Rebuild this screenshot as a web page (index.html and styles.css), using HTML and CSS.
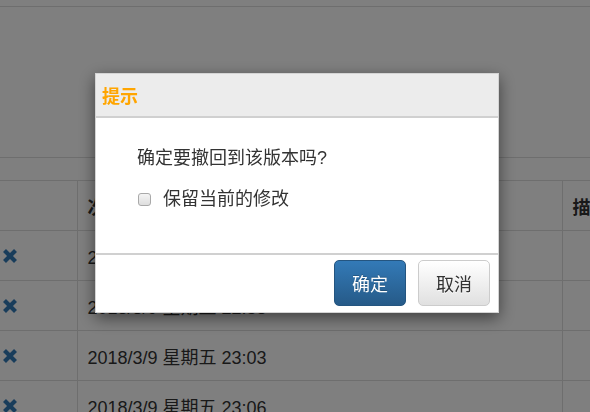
FILE: index.html
```html
<!DOCTYPE html>
<html lang="zh-CN">
<head>
<meta charset="utf-8">
<title>撤回版本</title>
<link rel="stylesheet" href="styles.css">
</head>
<body>
<div class="page">
  <div class="topline"></div>
  <div class="toolbar"></div>
  <table class="grid">
    <colgroup><col class="c-op"><col class="c-time"><col class="c-desc"></colgroup>
    <thead>
      <tr><th></th><th>次数</th><th>描述</th></tr>
    </thead>
    <tbody>
      <tr><td class="op"><svg class="x" viewBox="0 0 14 14"><path d="M1.5 1.5 12.5 12.5M12.5 1.5 1.5 12.5"/></svg></td><td>2018/3/9 星期五 22:51</td><td></td></tr>
      <tr><td class="op"><svg class="x" viewBox="0 0 14 14"><path d="M1.5 1.5 12.5 12.5M12.5 1.5 1.5 12.5"/></svg></td><td>2018/3/9 星期五 22:58</td><td></td></tr>
      <tr><td class="op"><svg class="x" viewBox="0 0 14 14"><path d="M1.5 1.5 12.5 12.5M12.5 1.5 1.5 12.5"/></svg></td><td>2018/3/9 星期五 23:03</td><td></td></tr>
      <tr><td class="op"><svg class="x" viewBox="0 0 14 14"><path d="M1.5 1.5 12.5 12.5M12.5 1.5 1.5 12.5"/></svg></td><td>2018/3/9 星期五 23:06</td><td></td></tr>
    </tbody>
  </table>
</div>
<div class="backdrop"></div>
<div class="modal">
  <div class="modal-header"><span class="modal-title">提示</span></div>
  <div class="modal-body">
    <p class="question">确定要撤回到该版本吗?</p>
    <label class="keep"><input type="checkbox" class="cb"><span>保留当前的修改</span></label>
  </div>
  <div class="modal-footer">
    <button class="btn btn-primary">确定</button>
    <button class="btn btn-default">取消</button>
  </div>
</div>
</body>
</html>
```
FILE: styles.css
```css
html, body {
  margin: 0;
  padding: 0;
  width: 590px;
  height: 412px;
  overflow: hidden;
  background: #fff;
  font-family: "Liberation Sans", "Noto Sans CJK SC", sans-serif;
  color: #333;
}

.page {
  width: 590px;
}

.topline {
  height: 6px;
  border-bottom: 1px solid #ddd;
}

.toolbar {
  height: 150px;
  border-bottom: 1px solid #ddd;
}

.grid {
  margin-top: 22px;
  width: 620px;
  table-layout: fixed;
  border-collapse: collapse;
  font-size: 18px;
}

.c-op { width: 77px; }
.c-time { width: 485px; }
.c-desc { width: 58px; }

.grid th,
.grid td {
  border: 1px solid #ddd;
  padding: 0 10px;
  text-align: left;
  vertical-align: middle;
  white-space: nowrap;
  overflow: hidden;
}

.grid th {
  height: 49px;
  font-weight: bold;
}

.grid td {
  height: 49px;
}

.grid th:first-child,
.grid td:first-child {
  border-left: none;
}

.grid td.op {
  padding: 0 0 0 3px;
}

.x {
  display: block;
  width: 14px;
  height: 14px;
  stroke: #337ab7;
  stroke-width: 4.2;
  fill: none;
}

.backdrop {
  position: fixed;
  inset: 0;
  background: rgba(0, 0, 0, 0.5);
}

.modal {
  position: fixed;
  left: 95px;
  top: 73px;
  width: 402px;
  background: #fff;
  border: 1px solid #d4d4d4;
  box-shadow: 0 5px 15px rgba(0, 0, 0, 0.5);
}

.modal-header {
  height: 42px;
  background: #ececec;
  border-bottom: 2px solid #d0d0d0;
  display: flex;
  align-items: center;
  padding: 0 6px;
}

.modal-title {
  font-size: 18px;
  font-weight: bold;
  color: #ffa500;
}

.modal-body {
  height: 135px;
  box-sizing: border-box;
  padding: 27px 20px 0 41px;
  font-size: 18px;
}

.question {
  margin: 0;
  line-height: 26px;
}

.keep {
  margin-top: 15px;
  display: flex;
  align-items: center;
  gap: 12px;
  line-height: 26px;
}

.cb {
  appearance: none;
  -webkit-appearance: none;
  margin: 0 0 0 1px;
  width: 13px;
  height: 13px;
  border: 1px solid #a9a9a9;
  border-radius: 3px;
  background: linear-gradient(#f4f4f4, #dedede);
  box-sizing: border-box;
}

.modal-footer {
  border-top: 2px solid #d0d0d0;
  padding: 5px 8px 6px 0;
  display: flex;
  justify-content: flex-end;
  gap: 12px;
}

.btn {
  width: 72px;
  height: 46px;
  border-radius: 5px;
  font-family: "Liberation Sans", "Noto Sans CJK SC", sans-serif;
  font-size: 18px;
  padding: 0;
  cursor: pointer;
}

.btn-primary {
  color: #fff;
  background: linear-gradient(#337ab7, #265a88);
  border: 1px solid #245580;
  text-shadow: 0 -1px 0 rgba(0, 0, 0, 0.2);
}

.btn-default {
  color: #333;
  background: linear-gradient(#fff, #e0e0e0);
  border: 1px solid #ccc;
  text-shadow: 0 1px 0 #fff;
}
```
